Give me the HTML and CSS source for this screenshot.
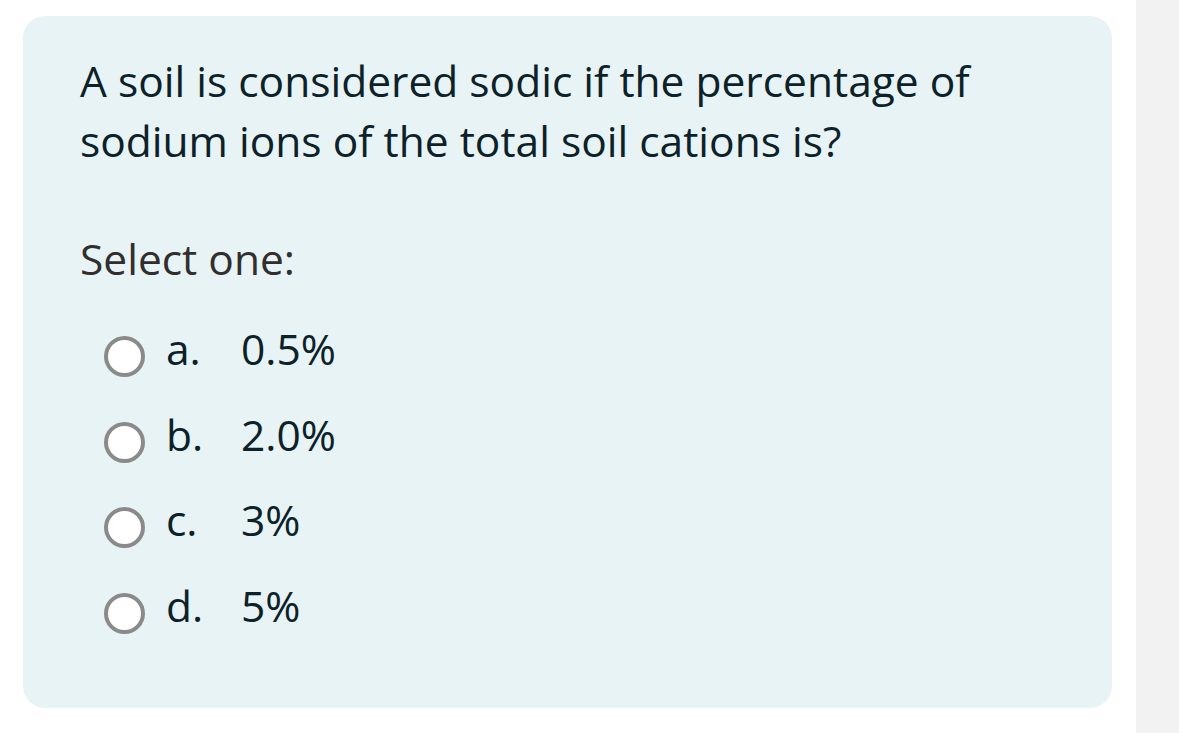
FILE: index.html
```html
<!DOCTYPE html>
<html lang="en">
<head>
<meta charset="utf-8">
<title>Question</title>
<link rel="stylesheet" href="styles.css">
</head>
<body>
<div class="page">
  <main class="main">
    <section class="card">
      <div class="qtext">A soil is considered sodic if the percentage of sodium ions of the total soil cations is?</div>
      <div class="prompt">Select one:</div>
      <div class="answers">
        <label class="opt"><span class="radio"></span><span class="letter">a.</span><span class="val">0.5%</span></label>
        <label class="opt"><span class="radio"></span><span class="letter">b.</span><span class="val">2.0%</span></label>
        <label class="opt"><span class="radio"></span><span class="letter">c.</span><span class="val">3%</span></label>
        <label class="opt"><span class="radio"></span><span class="letter">d.</span><span class="val">5%</span></label>
      </div>
    </section>
  </main>
  <aside class="side"></aside>
</div>
</body>
</html>
```
FILE: styles.css
```css
html, body {
  margin: 0;
  padding: 0;
  background: #ffffff;
}
body {
  font-family: "Open Sans", "Noto Sans", sans-serif;
  font-size: 42.5px;
  line-height: 60px;
  color: #0c2128;
}
.page {
  display: flex;
  height: 733px;
}
.main {
  width: 1136px;
  padding: 16px 24px 25px 23px;
  box-sizing: border-box;
}
.card {
  background: #e7f3f5;
  border-radius: 22px;
  height: 692px;
  box-sizing: border-box;
  padding: 35px 40px 0 57px;
}
.qtext {
  width: 1000px;
}
.prompt {
  margin-top: 58px;
  color: #332e2e;
}
.answers {
  margin-top: 17px;
  display: flex;
  flex-direction: column;
}
.opt {
  display: flex;
  align-items: center;
  height: 85.7px;
}
.radio {
  box-sizing: border-box;
  width: 41px;
  height: 41px;
  border-radius: 50%;
  border: 4px solid #8a8a8a;
  background: #ffffff;
  margin-left: 24px;
  margin-top: 15px;
  margin-right: 21px;
  flex: none;
}
.letter {
  width: 75px;
  flex: none;
}
.side {
  flex: 1;
  background: #f2f2f2;
}
```
